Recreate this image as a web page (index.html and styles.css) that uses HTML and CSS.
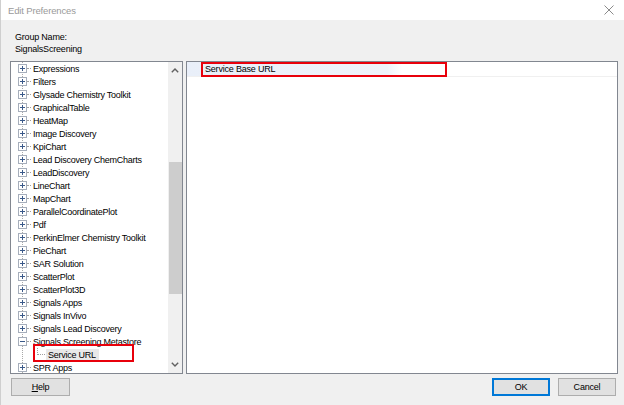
FILE: index.html
```html
<!DOCTYPE html>
<html>
<head>
<meta charset="utf-8">
<link rel="stylesheet" href="styles.css">
</head>
<body>
<div class="window">
  <div class="titlebar">
    <span class="title">Edit Preferences</span>
    <svg class="close" width="10" height="10" viewBox="0 0 10 10"><path d="M0.5 0.5 L9.5 9.5 M9.5 0.5 L0.5 9.5" stroke="#8a8a8a" stroke-width="1" fill="none"/></svg>
  </div>
  <div class="group">
    <div>Group Name:</div>
    <div>SignalsScreening</div>
  </div>
  <div class="panels">
    <div class="tree">
      <div class="list">
        <div class="row"><span class="pm"></span><span class="conn"></span><span class="lbl">Expressions</span></div>
        <div class="row"><span class="pm"></span><span class="conn"></span><span class="lbl">Filters</span></div>
        <div class="row"><span class="pm"></span><span class="conn"></span><span class="lbl">Glysade Chemistry Toolkit</span></div>
        <div class="row"><span class="pm"></span><span class="conn"></span><span class="lbl">GraphicalTable</span></div>
        <div class="row"><span class="pm"></span><span class="conn"></span><span class="lbl">HeatMap</span></div>
        <div class="row"><span class="pm"></span><span class="conn"></span><span class="lbl">Image Discovery</span></div>
        <div class="row"><span class="pm"></span><span class="conn"></span><span class="lbl">KpiChart</span></div>
        <div class="row"><span class="pm"></span><span class="conn"></span><span class="lbl">Lead Discovery ChemCharts</span></div>
        <div class="row"><span class="pm"></span><span class="conn"></span><span class="lbl">LeadDiscovery</span></div>
        <div class="row"><span class="pm"></span><span class="conn"></span><span class="lbl">LineChart</span></div>
        <div class="row"><span class="pm"></span><span class="conn"></span><span class="lbl">MapChart</span></div>
        <div class="row"><span class="pm"></span><span class="conn"></span><span class="lbl">ParallelCoordinatePlot</span></div>
        <div class="row"><span class="pm"></span><span class="conn"></span><span class="lbl">Pdf</span></div>
        <div class="row"><span class="pm"></span><span class="conn"></span><span class="lbl">PerkinElmer Chemistry Toolkit</span></div>
        <div class="row"><span class="pm"></span><span class="conn"></span><span class="lbl">PieChart</span></div>
        <div class="row"><span class="pm"></span><span class="conn"></span><span class="lbl">SAR Solution</span></div>
        <div class="row"><span class="pm"></span><span class="conn"></span><span class="lbl">ScatterPlot</span></div>
        <div class="row"><span class="pm"></span><span class="conn"></span><span class="lbl">ScatterPlot3D</span></div>
        <div class="row"><span class="pm"></span><span class="conn"></span><span class="lbl">Signals Apps</span></div>
        <div class="row"><span class="pm"></span><span class="conn"></span><span class="lbl">Signals InVivo</span></div>
        <div class="row"><span class="pm"></span><span class="conn"></span><span class="lbl">Signals Lead Discovery</span></div>
        <div class="row"><span class="pm minus"></span><span class="conn"></span><span class="lbl">Signals Screening Metastore</span></div>
        <div class="row child"><span class="elbow"></span><span class="lbl sel">Service URL</span><span class="mark mark-tree"></span></div>
        <div class="row"><span class="pm"></span><span class="conn"></span><span class="lbl">SPR Apps</span></div>
      </div>
      <div class="scrollbar">
        <div class="sb-btn"><svg width="8" height="5" viewBox="0 0 8 5"><path d="M0.8 4.2 L4 1 L7.2 4.2" stroke="#606060" stroke-width="1.4" fill="none"/></svg></div>
        <div class="sb-track"><div class="thumb"></div></div>
        <div class="sb-btn"><svg width="8" height="5" viewBox="0 0 8 5"><path d="M0.8 0.8 L4 4 L7.2 0.8" stroke="#606060" stroke-width="1.4" fill="none"/></svg></div>
      </div>
    </div>
    <div class="props">
      <div class="prop-row"><span class="prop-name">Service Base URL</span><span class="mark mark-prop"></span></div>
    </div>
  </div>
  <div class="buttons">
    <button class="btn btn-help"><u>H</u>elp</button>
    <div class="spacer"></div>
    <button class="btn btn-ok">OK</button>
    <button class="btn btn-cancel">Cancel</button>
  </div>
</div>
</body>
</html>
```
FILE: styles.css
```css
html, body {
  margin: 0;
  padding: 0;
}
body {
  width: 624px;
  height: 405px;
  overflow: hidden;
  background: #f0f0f0;
  font-family: "Liberation Sans", Arial, sans-serif;
  font-size: 9px;
  color: #000;
}
.window {
  height: 405px;
  display: flex;
  flex-direction: column;
  border-left: 1px solid #cfcfcf;
  box-sizing: border-box;
}
.titlebar {
  height: 20px;
  flex: none;
  background: #fff;
  display: flex;
  align-items: center;
  justify-content: space-between;
  padding: 0 10px 0 7px;
  color: #9a9a9a;
  font-size: 9.5px;
  letter-spacing: -0.15px;
}
.close {
  display: block;
}
.group {
  padding: 11px 0 0 14px;
  line-height: 12px;
  letter-spacing: -0.2px;
}
.panels {
  display: flex;
  gap: 3px;
  margin: 6px 0 0 9px;
  height: 313px;
  flex: none;
}
.tree {
  width: 173px;
  box-sizing: border-box;
  border: 1px solid #828790;
  background: #fff;
  display: flex;
  overflow: hidden;
}
.list {
  flex: 1;
  overflow: hidden;
  background-image: repeating-linear-gradient(to bottom, #a8a8a8 0 1px, transparent 1px 2px);
  background-size: 1px 100%;
  background-position: 11px 0;
  background-repeat: no-repeat;
}
.row {
  height: 13px;
  display: flex;
  align-items: center;
  padding-left: 7px;
  position: relative;
  white-space: nowrap;
  letter-spacing: -0.25px;
}
.pm {
  width: 9px;
  height: 9px;
  box-sizing: border-box;
  border: 1px solid #a6aebb;
  background: #fff;
  position: relative;
  flex: none;
}
.pm::before {
  content: "";
  position: absolute;
  left: 1px;
  top: 3px;
  width: 5px;
  height: 1px;
  background: #3b5a8a;
}
.pm::after {
  content: "";
  position: absolute;
  left: 3px;
  top: 1px;
  width: 1px;
  height: 5px;
  background: #3b5a8a;
}
.pm.minus::after {
  display: none;
}
.conn {
  width: 4px;
  border-top: 1px dotted #a0a0a0;
  flex: none;
  margin-right: 1px;
}
.lbl {
  padding: 0 1px;
}
.child {
  padding-left: 26px;
}
.elbow {
  align-self: flex-start;
  width: 7px;
  height: 6px;
  border-left: 1px dotted #a0a0a0;
  border-bottom: 1px dotted #a0a0a0;
  flex: none;
  margin-right: 1px;
}
.sel {
  background: #e8e8e8;
  padding: 0 3px 0 2px;
  line-height: 12px;
}
.mark {
  position: absolute;
  border: 2px solid #e8000b;
  box-sizing: border-box;
  pointer-events: none;
}
.mark-tree {
  left: 22px;
  top: -4px;
  width: 101px;
  height: 18px;
}
.scrollbar {
  width: 14px;
  flex: none;
  background: #f0f0f0;
  display: flex;
  flex-direction: column;
}
.sb-btn {
  height: 17px;
  display: flex;
  align-items: center;
  justify-content: center;
  flex: none;
}
.sb-track {
  flex: 1;
}
.thumb {
  margin: 83px 0 0 1px;
  height: 132px;
  background: #cdcdcd;
}
.props {
  width: 432px;
  box-sizing: border-box;
  border: 1px solid #828790;
  background: #fff;
}
.prop-row {
  position: relative;
  height: 14px;
  display: flex;
  align-items: center;
  padding-left: 18px;
  border-bottom: 1px solid #f0f0f0;
  background: linear-gradient(to right, #e9eff9 0, #eef3fa 200px, #fff 215px);
  letter-spacing: -0.2px;
}
.mark-prop {
  left: 14px;
  top: 0;
  width: 246px;
  height: 15px;
}
.buttons {
  display: flex;
  align-items: center;
  margin-top: 4px;
  padding: 0 8px 0 10px;
  gap: 8px;
}
.spacer {
  flex: 1;
}
.btn {
  font-family: "Liberation Sans", Arial, sans-serif;
  font-size: 9px;
  color: #000;
  height: 18px;
  background: #e1e1e1;
  border: 1px solid #adadad;
  padding: 0;
  margin: 0;
  letter-spacing: -0.2px;
}
.btn-help {
  width: 59px;
}
.btn-ok {
  width: 58px;
  border: 2px solid #0078d7;
}
.btn-cancel {
  width: 58px;
}
```
